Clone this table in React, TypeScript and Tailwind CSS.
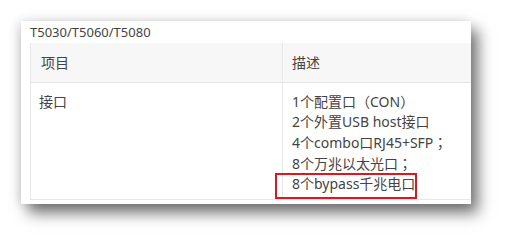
export default function App() {
  const font = { fontFamily: '"Noto Sans", "Noto Sans CJK SC", sans-serif' };
  const tc = { fontFamily: '"Noto Sans CJK TC", sans-serif' };
  return (
    <div className="w-[513px] h-[247px] bg-white overflow-hidden pt-[21px] pl-[21px]" style={font}>
      <div className="w-[450px] h-[183px] bg-white shadow-[7px_9px_14px_rgba(0,0,0,0.55),-3px_0_10px_rgba(0,0,0,0.12)] pl-[9px] overflow-hidden">
        <div className="h-[22px] flex items-center text-[13px] text-[#444] pt-[1px]">T5030/T5060/T5080</div>
        <div className="border-l border-[#e8e8e8] text-[14px] text-[#444]">
          <div className="flex h-[40px] bg-[#f7f7f7] border-b border-[#e6e6e6]">
            <div className="w-[251px] flex items-center pl-[10px]">项目</div>
            <div className="flex-1 flex items-center pl-[9px] border-l border-[#e8e8e8]">描述</div>
          </div>
          <div className="flex border-b border-[#e8e8e8] h-[117px]">
            <div className="w-[251px] pl-[8px] pt-[9px] leading-[20px]">接口</div>
            <div className="flex-1 pl-[9px] pt-[9px] border-l border-[#e8e8e8] leading-[20px]">
              <div>1个配置口（CON）</div>
              <div>2个外置USB host接口</div>
              <div>4个combo口RJ45+SFP<span style={tc}>；</span></div>
              <div>8个万兆以太光口<span style={tc}>；</span></div>
              <div className="relative">
                8个bypass千兆电口
                <span className="absolute left-[-17px] top-[-1px] w-[142px] h-[26px] border-2 border-[#e8121a]" />
              </div>
            </div>
          </div>
        </div>
      </div>
    </div>
  );
}
